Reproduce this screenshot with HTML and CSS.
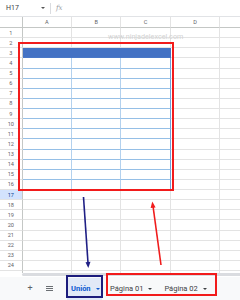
FILE: index.html
```html
<!DOCTYPE html>
<html lang="es">
<head>
<meta charset="utf-8">
<title>Hoja</title>
<link rel="stylesheet" href="styles.css">
</head>
<body>
<div class="app">
  <div class="toolbar">
    <span class="namebox">H17</span>
    <span class="caret"></span>
    <span class="divider"></span>
    <span class="fx">fx</span>
  </div>
  <div class="colhead">
    <div class="rh corner"></div>
    <div class="ch">A</div><div class="ch">B</div><div class="ch">C</div><div class="ch">D</div><div class="ch"></div>
  </div>
  <div class="rows">
    <div class="row"><div class="rh">1</div><div class="c"></div><div class="c"></div><div class="c"></div><div class="c"></div><div class="c"></div></div>
    <div class="row"><div class="rh">2</div><div class="c"></div><div class="c"></div><div class="c"></div><div class="c"></div><div class="c"></div></div>
    <div class="row"><div class="rh">3</div><div class="c th"></div><div class="c th"></div><div class="c th"></div><div class="c"></div><div class="c"></div></div>
    <div class="row"><div class="rh">4</div><div class="c td"></div><div class="c td"></div><div class="c td last"></div><div class="c"></div><div class="c"></div></div>
    <div class="row"><div class="rh">5</div><div class="c td"></div><div class="c td"></div><div class="c td last"></div><div class="c"></div><div class="c"></div></div>
    <div class="row"><div class="rh">6</div><div class="c td"></div><div class="c td"></div><div class="c td last"></div><div class="c"></div><div class="c"></div></div>
    <div class="row"><div class="rh">7</div><div class="c td"></div><div class="c td"></div><div class="c td last"></div><div class="c"></div><div class="c"></div></div>
    <div class="row"><div class="rh">8</div><div class="c td"></div><div class="c td"></div><div class="c td last"></div><div class="c"></div><div class="c"></div></div>
    <div class="row"><div class="rh">9</div><div class="c td"></div><div class="c td"></div><div class="c td last"></div><div class="c"></div><div class="c"></div></div>
    <div class="row"><div class="rh">10</div><div class="c td"></div><div class="c td"></div><div class="c td last"></div><div class="c"></div><div class="c"></div></div>
    <div class="row"><div class="rh">11</div><div class="c td"></div><div class="c td"></div><div class="c td last"></div><div class="c"></div><div class="c"></div></div>
    <div class="row"><div class="rh">12</div><div class="c td"></div><div class="c td"></div><div class="c td last"></div><div class="c"></div><div class="c"></div></div>
    <div class="row"><div class="rh">13</div><div class="c td"></div><div class="c td"></div><div class="c td last"></div><div class="c"></div><div class="c"></div></div>
    <div class="row"><div class="rh">14</div><div class="c td"></div><div class="c td"></div><div class="c td last"></div><div class="c"></div><div class="c"></div></div>
    <div class="row"><div class="rh">15</div><div class="c td"></div><div class="c td"></div><div class="c td last"></div><div class="c"></div><div class="c"></div></div>
    <div class="row"><div class="rh">16</div><div class="c td"></div><div class="c td"></div><div class="c td last"></div><div class="c"></div><div class="c"></div></div>
    <div class="row"><div class="rh sel">17</div><div class="c"></div><div class="c"></div><div class="c"></div><div class="c"></div><div class="c"></div></div>
    <div class="row"><div class="rh">18</div><div class="c"></div><div class="c"></div><div class="c"></div><div class="c"></div><div class="c"></div></div>
    <div class="row"><div class="rh">19</div><div class="c"></div><div class="c"></div><div class="c"></div><div class="c"></div><div class="c"></div></div>
    <div class="row"><div class="rh">20</div><div class="c"></div><div class="c"></div><div class="c"></div><div class="c"></div><div class="c"></div></div>
    <div class="row"><div class="rh">21</div><div class="c"></div><div class="c"></div><div class="c"></div><div class="c"></div><div class="c"></div></div>
    <div class="row"><div class="rh">22</div><div class="c"></div><div class="c"></div><div class="c"></div><div class="c"></div><div class="c"></div></div>
    <div class="row"><div class="rh">23</div><div class="c"></div><div class="c"></div><div class="c"></div><div class="c"></div><div class="c"></div></div>
    <div class="row"><div class="rh">24</div><div class="c"></div><div class="c"></div><div class="c"></div><div class="c"></div><div class="c"></div></div>
    <div class="row"><div class="rh"></div><div class="c"></div><div class="c"></div><div class="c"></div><div class="c"></div><div class="c"></div></div>
  </div>
  <div class="hscroll"><div class="thumb"></div></div>
  <div class="tabs">
    <span class="add">+</span>
    <span class="menu"></span>
    <span class="tab active">Unión<span class="tcaret"></span></span>
    <span class="tab first">Página 01<span class="tcaret"></span></span>
    <span class="tab">Página 02<span class="tcaret"></span></span>
  </div>

  <div class="watermark">www.ninjadelexcel.com</div>
  <div class="mark-table"></div>
  <div class="mark-active"></div>
  <div class="mark-tabs"></div>
  <svg class="arrows" width="240" height="300" viewBox="0 0 240 300">
    <line x1="83.5" y1="197" x2="88" y2="263" stroke="#1f1f85" stroke-width="1.6"/>
    <polygon points="88.3,268 90.5,261.8 85.5,262.2" fill="#1f1f85"/>
    <line x1="161" y1="265" x2="153" y2="206" stroke="#f01c1c" stroke-width="1.6"/>
    <polygon points="152.3,201.5 155.6,207.4 150.6,208" fill="#f01c1c"/>
  </svg>
</div>
</body>
</html>
```

FILE: styles.css
```css
* { box-sizing: border-box; }
body {
  margin: 0;
  width: 240px;
  height: 300px;
  overflow: hidden;
  background: #fff;
  font-family: Roboto, "Liberation Sans", Arial, sans-serif;
}
.app {
  position: relative;
  width: 240px;
  height: 300px;
  display: flex;
  flex-direction: column;
  overflow: hidden;
}
.toolbar {
  flex: none;
  height: 17px;
  border-bottom: 1px solid #e1e3e6;
  display: flex;
  align-items: center;
}
.namebox {
  font-size: 7px;
  color: #3c4043;
  margin-left: 6px;
  width: 34.5px;
}
.caret {
  width: 0;
  height: 0;
  border-left: 2.5px solid transparent;
  border-right: 2.5px solid transparent;
  border-top: 2.5px solid #555;
}
.divider {
  width: 1px;
  height: 11px;
  background: #dadce0;
  margin-left: 5.5px;
}
.fx {
  font-family: "DejaVu Serif", serif;
  font-style: italic;
  font-size: 7px;
  color: #9aa0a6;
  margin-left: 5px;
}
.colhead, .row {
  display: flex;
  width: max-content;
}
.colhead {
  flex: none;
  height: 11px;
}
.rows {
  flex: none;
  height: 245px;
  overflow: hidden;
}
.row { height: 10.13px; }
.rh {
  flex: none;
  width: 22.7px;
  height: 100%;
  border-right: 1px solid #c4c7c5;
  border-bottom: 1px solid #e3e3e3;
  font-size: 5.6px;
  color: #5f6368;
  display: flex;
  align-items: center;
  justify-content: center;
}
.corner { border-bottom: 1px solid #c4c7c5; }
.rh.sel {
  background: #d3e3fd;
  color: #0b3f91;
}
.ch {
  flex: none;
  width: 49.4px;
  height: 100%;
  border-right: 1px solid #e3e3e3;
  border-bottom: 1px solid #c4c7c5;
  font-size: 5.6px;
  color: #5f6368;
  display: flex;
  align-items: center;
  justify-content: center;
}
.c {
  flex: none;
  width: 49.4px;
  height: 100%;
  border-right: 1px solid #e3e3e3;
  border-bottom: 1px solid #e3e3e3;
}
.c.th {
  background: #4472c4;
  border-right-color: #4472c4;
  border-bottom-color: #4a78c8;
}
.c.td {
  border-right-color: #b3d1ee;
  border-bottom-color: #95bfe6;
}
.c.td.last { border-right-color: #6fa3dc; }
.hscroll {
  flex: none;
  height: 4px;
  padding-left: 22px;
}
.thumb {
  height: 3px;
  background: #dadce0;
  border-radius: 2px 0 0 2px;
}
.tabs {
  flex: 1;
  background: #f8f9fa;
  display: flex;
  align-items: center;
  padding-left: 25px;
}
.add {
  width: 10px;
  text-align: center;
  font-size: 9px;
  color: #5f6368;
  line-height: 1;
}
.menu {
  width: 7px;
  height: 5px;
  margin-left: 10.5px;
  border-top: 1px solid #6b6f73;
  border-bottom: 1px solid #6b6f73;
  background: linear-gradient(#6b6f73, #6b6f73) center / 100% 1px no-repeat;
}
.tab {
  display: flex;
  align-items: center;
  height: 22px;
  padding: 0 8px 0 4px;
  font-size: 7.5px;
  font-weight: 400;
  color: #3c4043;
}
.tab.active {
  margin-left: 14.5px;
  padding-right: 2px;
  background: #e1e9f7;
  color: #0b57d0;
  font-weight: 700;
}
.tab.first { margin-left: 4.5px; }
.tcaret {
  width: 0;
  height: 0;
  margin-left: 5px;
  border-left: 2.5px solid transparent;
  border-right: 2.5px solid transparent;
  border-top: 2.5px solid currentColor;
}
.watermark {
  position: absolute;
  left: 108px;
  top: 31.5px;
  font-size: 7.2px;
  color: #d2d2d2;
  white-space: nowrap;
}
.mark-table {
  position: absolute;
  left: 17.5px;
  top: 42px;
  width: 156.5px;
  height: 149px;
  border: 2px solid #f21b1b;
}
.mark-active {
  position: absolute;
  left: 66px;
  top: 275px;
  width: 37px;
  height: 23px;
  border: 2px solid #1c1c7c;
}
.mark-tabs {
  position: absolute;
  left: 106px;
  top: 273px;
  width: 111px;
  height: 23px;
  border: 2px solid #f21b1b;
}
.arrows {
  position: absolute;
  left: 0;
  top: 0;
}
```
